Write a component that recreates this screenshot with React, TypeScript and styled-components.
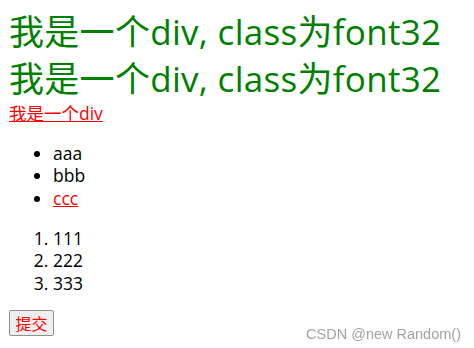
import React from "react";
import styled, { createGlobalStyle } from "styled-components";

const GlobalStyle = createGlobalStyle`
  body {
    margin: 9px;
    background: #ffffff;
    color: #000000;
    font-family: "Open Sans", "Noto Sans CJK SC", sans-serif;
  }
`;

const Page = styled.div`
  display: block;
`;

const Font32 = styled.div`
  font-size: 35px;
  line-height: 46.5px;
  letter-spacing: 0.3px;
  color: green;
  white-space: nowrap;
`;

const LinkLine = styled.div`
  font-size: 17.5px;
  line-height: 22px;
`;

const RedLink = styled.a`
  color: red;
  text-decoration: underline;
  cursor: pointer;
`;

const List = styled.ul<{ ordered?: boolean }>`
  margin: 17.5px 0;
  padding-left: 44px;
  list-style: ${({ ordered }) => (ordered ? "decimal" : "disc")};
  font-size: 17.5px;
  line-height: 22.5px;
`;

const Item = styled.li``;

const SubmitButton = styled.button`
  display: block;
  width: 45px;
  height: 26px;
  margin-top: -2px;
  padding: 0;
  font-family: "Noto Sans CJK SC", sans-serif;
  font-size: 16px;
  line-height: 1;
  color: red;
  background: #efefef;
  border: 1px solid #8f8f8f;
  border-radius: 2px;
`;

const Watermark = styled.div`
  position: fixed;
  right: 13px;
  bottom: 6px;
  font-family: "Liberation Sans", Arial, sans-serif;
  font-size: 14.5px;
  color: #a3a3a3;
`;

const App = () => {
  return (
    <>
      <GlobalStyle />
      <Page>
        <Font32>我是一个div, class为font32</Font32>
        <Font32>我是一个div, class为font32</Font32>
        <LinkLine>
          <RedLink>我是一个div</RedLink>
        </LinkLine>
        <List>
          <Item>aaa</Item>
          <Item>bbb</Item>
          <Item>
            <RedLink>ccc</RedLink>
          </Item>
        </List>
        <List as="ol" ordered>
          <Item>111</Item>
          <Item>222</Item>
          <Item>333</Item>
        </List>
        <SubmitButton>提交</SubmitButton>
      </Page>
      <Watermark>CSDN @new Random()</Watermark>
    </>
  );
};

export default App;
